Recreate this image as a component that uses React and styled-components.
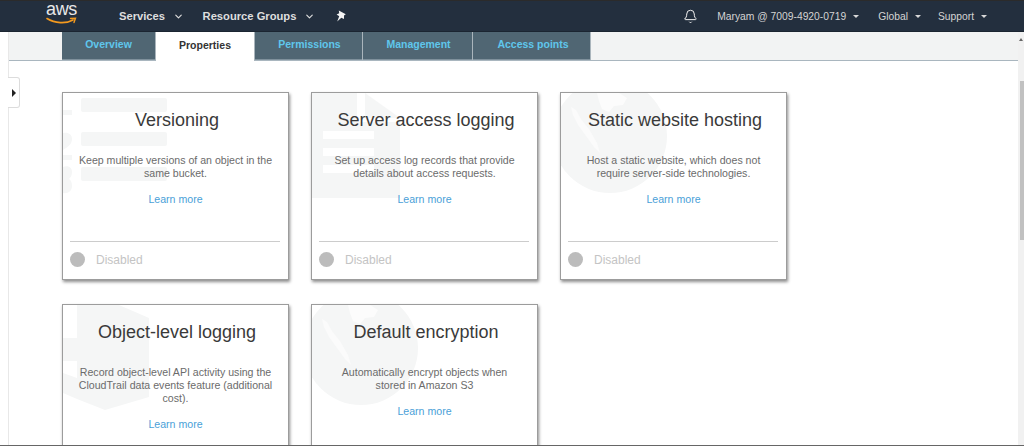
import React from "react";
import styled, { createGlobalStyle } from "styled-components";
import { Bell, ChevronDown } from "lucide-react";

const Global = createGlobalStyle`
  html, body { margin: 0; padding: 0; background: #fff; }
  body { font-family: "Liberation Sans", Arial, sans-serif; }
`;

const Page = styled.div`
  width: 1024px;
  height: 446px;
  display: flex;
  flex-direction: column;
  overflow: hidden;
  box-sizing: border-box;
  border-bottom: 1px solid #666;
`;

const Header = styled.header`
  height: 32px;
  flex: none;
  box-sizing: border-box;
  background: #232f3e;
  border-top: 1px solid #2b2b2b;
  border-bottom: 1px solid #1b2531;
  display: flex;
  align-items: center;
  padding-left: 46px;
  padding-right: 37px;
  color: #e6e6e6;
`;

const Logo = styled.div`
  width: 31px;
  height: 24px;
  margin-right: 42px;
  margin-top: -4px;
  display: flex;
  flex-direction: column;
  align-items: center;
`;

const LogoText = styled.span`
  font-size: 18px;
  line-height: 15px;
  color: #e8e8e8;
  letter-spacing: -0.3px;
`;

const Swoosh = styled.svg`
  width: 31px;
  height: 8px;
`;

const NavItem = styled.div`
  display: flex;
  align-items: center;
  font-size: 11.2px;
  font-weight: 700;
  color: #dedede;
  margin-right: ${(p) => p.$gap}px;
  gap: 8px;
`;

const Pin = styled.svg`
  width: 12px;
  height: 12px;
  margin-top: -1px;
`;

const RightNav = styled.div`
  margin-left: auto;
  display: flex;
  align-items: center;
`;

const BellWrap = styled.div`
  display: flex;
  margin-right: 19px;
  color: #f0f0f0;
`;

const Menu = styled.div`
  display: flex;
  align-items: center;
  font-size: 10.3px;
  color: #d4d4d4;
  margin-left: ${(p) => p.$gap || 0}px;
  gap: 7px;
`;

const Caret = styled.i`
  width: 0;
  height: 0;
  border-left: 3px solid transparent;
  border-right: 3px solid transparent;
  border-top: 3px solid #d8d8d8;
`;

const Body = styled.div`
  flex: 1;
  display: flex;
  min-height: 0;
`;

const Gutter = styled.div`
  width: 9px;
  flex: none;
  background: #fff;
  border-right: 1px solid #e8e8e8;
  box-sizing: border-box;
`;

const Main = styled.main`
  flex: 1;
  min-width: 0;
  display: flex;
  flex-direction: column;
  position: relative;
`;

const TabBar = styled.nav`
  height: 29px;
  flex: none;
  box-sizing: border-box;
  background: #f2f3f3;
  border-bottom: 1px solid #a9b6bf;
  display: flex;
  padding-left: 53px;
`;

const Tab = styled.div`
  width: ${(p) => p.$w}px;
  box-sizing: border-box;
  flex: none;
  display: flex;
  align-items: center;
  justify-content: center;
  font-size: 10.5px;
  font-weight: 700;
  padding-bottom: 4px;
  padding-left: ${(p) => p.$shift || 0}px;
  color: ${(p) => (p.$active ? "#333" : "#5fc6ec")};
  background: ${(p) => (p.$active ? "#fff" : "#506673")};
  border-right: 1px solid #aab5bc;
  height: ${(p) => (p.$active ? 29 : 28)}px;
  box-shadow: ${(p) => (p.$active ? "none" : "inset 0 -1px 0 #7f919c")};
`;

const Toggle = styled.div`
  position: absolute;
  left: -1px;
  top: 45px;
  width: 12px;
  height: 31px;
  box-sizing: border-box;
  background: #fff;
  border: 1px solid #dcdcdc;
  border-left: none;
  border-radius: 0 3px 3px 0;
  display: flex;
  align-items: center;
  justify-content: center;
  &::before {
    content: "";
    border-left: 4px solid #222;
    border-top: 4px solid transparent;
    border-bottom: 4px solid transparent;
  }
`;

const Grid = styled.div`
  display: grid;
  grid-template-columns: repeat(3, 227px);
  grid-auto-rows: 188px;
  column-gap: 22px;
  row-gap: 24px;
  padding: 31px 0 0 53px;
`;

const Card = styled.section`
  position: relative;
  overflow: hidden;
  box-sizing: border-box;
  background: #fff;
  border: 1px solid #9c9c9c;
  box-shadow: 1px 2px 3px rgba(0, 0, 0, 0.45);
  padding: 0 8px;
  display: flex;
  flex-direction: column;
  align-items: center;
`;

const CardArt = styled.svg`
  position: absolute;
  left: 0;
  top: 0;
  width: 227px;
  height: 188px;
`;

const Title = styled.h3`
  position: relative;
  margin: 16px 0 0 3px;
  font-size: 18px;
  line-height: 22px;
  font-weight: 400;
  color: #3a3a3a;
`;

const Desc = styled.p`
  position: relative;
  margin: 23px 0 0;
  width: 196px;
  font-size: 10.6px;
  line-height: 13px;
  text-align: center;
  color: #6b6b6b;
`;

const Learn = styled.a`
  position: relative;
  margin-top: 13px;
  font-size: 10.6px;
  line-height: 13px;
  color: #4a9fd8;
`;

const Footer = styled.div`
  position: absolute;
  left: 7px;
  right: 8px;
  top: 148px;
  height: 35px;
  border-top: 1px solid #ccc;
  display: flex;
  align-items: center;
  gap: 11px;
`;

const Dot = styled.span`
  width: 15px;
  height: 15px;
  border-radius: 50%;
  background: #bcbcbc;
`;

const Status = styled.span`
  font-size: 12px;
  color: #c4c4c4;
`;

const Scroll = styled.div`
  width: 6px;
  flex: none;
  background: #f1f1f1;
  padding-top: 49px;
  box-sizing: border-box;
  display: flex;
  justify-content: flex-end;
  position: relative;
  &::before {
    content: "";
    position: absolute;
    top: 6px;
    left: 1px;
    border-left: 2px solid transparent;
    border-right: 2px solid transparent;
    border-bottom: 3px solid #666;
  }
`;

const Thumb = styled.div`
  width: 4px;
  height: 159px;
  background: #c1c1c1;
`;

const ART = "#f5f6f6";

const Bars = () => (
  <CardArt viewBox="0 0 227 188">
    <rect x="18" y="5" width="86" height="14" rx="2" fill={ART} />
    <rect x="18" y="39" width="86" height="14" rx="2" fill={ART} />
    <rect x="18" y="74" width="86" height="14" rx="2" fill={ART} />
    <path d="M0 17h9v5H0zM0 40c5-1 9 1 9 6s-4 8-9 11v5h9v5H0zM0 74c6-2 9 1 9 5s-2 6-3 7c2 1 3 4 3 7 0 5-4 8-9 7z" fill={ART} />
  </CardArt>
);

const Doc = () => (
  <CardArt viewBox="0 0 227 188">
    <path d="M0 0h45v29h43v76H0z" fill={ART} />
    <path d="M53 0l35 25H53z" fill={ART} />
    <rect x="11" y="38" width="51" height="8" fill="#fff" />
    <rect x="11" y="55" width="51" height="8" fill="#fff" />
    <rect x="11" y="72" width="51" height="8" fill="#fff" />
  </CardArt>
);

const Globe = () => (
  <CardArt viewBox="0 0 227 188">
    <circle cx="49" cy="43" r="57" fill={ART} />
    <path d="M36 0h22l8 5-4 7-9 1-5 6-7-3-3-8z" fill="#fcfcfc" />
    <path d="M10 14l5 3 5 9 8 10 8 14 3 10-6-6-8-11-8-11-5-10z" fill="#fbfbfb" />
  </CardArt>
);

const Hex = () => (
  <CardArt viewBox="0 0 227 188">
    <path d="M14 0h42l30 13v79l-44 13-28-11V56H0V33h14z" fill={ART} />
    <path d="M0 0h9v10H0zM0 56h9v10H0z" fill="#fff" />
    <path d="M0 10l14 3v20H0z" fill="#fff" />
    <path d="M0 68l14 5v21l-14-6z" fill={ART} />
  </CardArt>
);

const tabs = [
  ["Overview", 94, 0],
  ["Properties", 99, 0, true],
  ["Permissions", 108, 2],
  ["Management", 110, 2],
  ["Access points", 118, 3],
];

const cards = [
  { art: <Bars />, title: "Versioning", desc: "Keep multiple versions of an object in the same bucket.", status: true },
  { art: <Doc />, title: "Server access logging", desc: "Set up access log records that provide details about access requests.", status: true },
  { art: <Globe />, title: "Static website hosting", desc: "Host a static website, which does not require server-side technologies.", status: true },
  { art: <Hex />, title: "Object-level logging", desc: "Record object-level API activity using the CloudTrail data events feature (additional cost)." },
  { art: <Globe />, title: "Default encryption", desc: "Automatically encrypt objects when stored in Amazon S3" },
];

export default function App() {
  return (
    <Page>
      <Global />
      <Header>
        <Logo>
          <LogoText>aws</LogoText>
          <Swoosh viewBox="0 0 31 8">
            <path d="M1 1.5C9 6.5 20 7 27 3" fill="none" stroke="#f49a1f" strokeWidth="1.6" strokeLinecap="round" />
            <path d="M24.5 1.5L29.5 1.2 28 5.6" fill="none" stroke="#f49a1f" strokeWidth="1.4" strokeLinecap="round" />
          </Swoosh>
        </Logo>
        <NavItem $gap={18.5}>
          Services <ChevronDown size={11} strokeWidth={2.5} />
        </NavItem>
        <NavItem $gap={20}>
          Resource Groups <ChevronDown size={11} strokeWidth={2.5} />
        </NavItem>
        <Pin viewBox="0 0 12 12">
          <path d="M3.8 0.4L10.8 4.2 9 5.6 9 9 6.3 7.8 2.2 11.6 4.2 6.3 1.6 4.5 4.2 3.2z" fill="#f4f4f4" />
        </Pin>
        <RightNav>
          <BellWrap>
            <Bell size={15} strokeWidth={1.6} />
          </BellWrap>
          <Menu>
            Maryam @ 7009-4920-0719 <Caret />
          </Menu>
          <Menu $gap={19}>
            Global <Caret />
          </Menu>
          <Menu $gap={17}>
            Support <Caret />
          </Menu>
        </RightNav>
      </Header>
      <Body>
        <Gutter />
        <Main>
          <TabBar>
            {tabs.map(([label, w, shift, active]) => (
              <Tab key={label} $w={w} $shift={shift} $active={active}>
                {label}
              </Tab>
            ))}
          </TabBar>
          <Toggle />
          <Grid>
            {cards.map((c) => (
              <Card key={c.title}>
                {c.art}
                <Title>{c.title}</Title>
                <Desc>{c.desc}</Desc>
                <Learn>Learn more</Learn>
                {c.status && (
                  <Footer>
                    <Dot />
                    <Status>Disabled</Status>
                  </Footer>
                )}
              </Card>
            ))}
          </Grid>
        </Main>
        <Scroll>
          <Thumb />
        </Scroll>
      </Body>
    </Page>
  );
}
